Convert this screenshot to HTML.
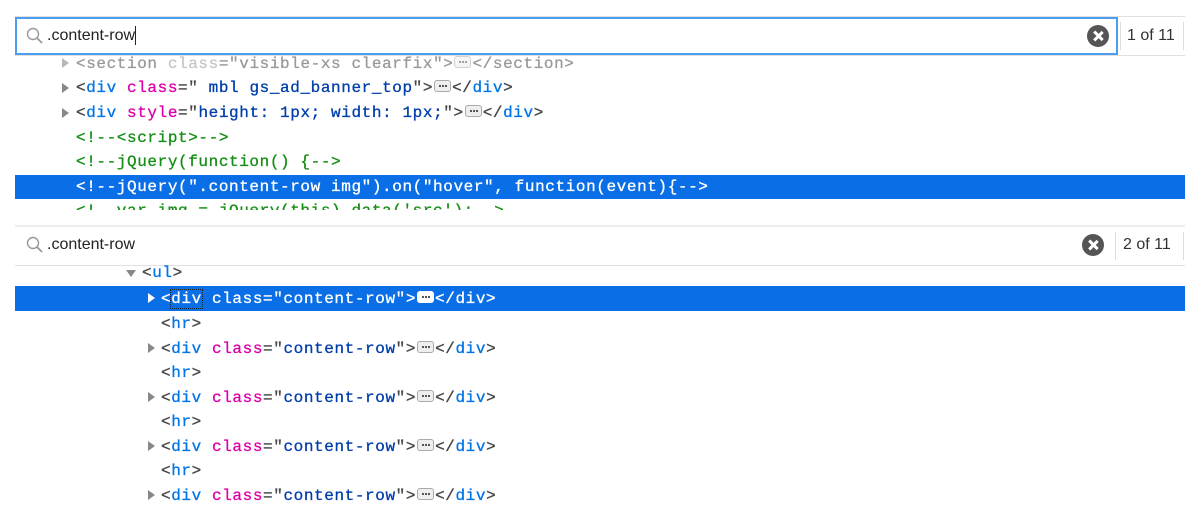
<!DOCTYPE html>
<html><head><meta charset="utf-8"><style>
*{margin:0;padding:0;box-sizing:border-box}
body{width:1200px;height:527px;background:#fff;position:relative;overflow:hidden;font-family:"Liberation Mono",monospace}
.m{font-family:"Liberation Mono",monospace;font-size:16px;letter-spacing:0.6px;white-space:pre;position:absolute;height:24px;line-height:24px;color:#474747;-webkit-text-stroke:0.3px currentColor}
.sel{position:absolute;left:15px;width:1170px;background:#0a6ee6}
.t{color:#0074e8}.a{color:#dd00a9}.v{color:#003eaa}.c{color:#168f16}
.ell{display:inline-block;width:17px;height:12px;border:1px solid #aaa;border-radius:3px;background:#eee;vertical-align:middle;position:relative;top:-2px;margin:0 1px;letter-spacing:0;-webkit-text-stroke:0}
.ell:after{content:"";position:absolute;left:4px;top:4px;width:2px;height:2px;background:#555;box-shadow:3px 0 #555,6px 0 #555}
.tri{position:absolute;width:0;height:0;border-left:7px solid #888;border-top:5.5px solid transparent;border-bottom:5.5px solid transparent}
.trid{position:absolute;width:0;height:0;border-top:7px solid #888;border-left:5.5px solid transparent;border-right:5.5px solid transparent}
.sans{font-family:"Liberation Sans",sans-serif}
.clr{position:absolute;width:22px;height:22px;border-radius:50%;background:#555}
.clr:before,.clr:after{content:"";position:absolute;left:10px;top:5px;width:2.5px;height:12px;background:#fff;transform:rotate(45deg)}
.clr:after{transform:rotate(-45deg)}
.sep{position:absolute;width:1px;background:#ddd}
.hl{position:absolute;left:15px;width:1170px;height:1px;background:#e0e0e0}
.w{color:#fff}
</style></head><body>
<div class="hl" style="top:16px"></div>
<div style="position:absolute;left:15px;top:17px;width:1103px;height:38px;border:2px solid #4a9df0"></div>
<svg style="position:absolute;left:26px;top:27px" width="18" height="18" viewBox="0 0 18 18"><circle cx="7" cy="7" r="5.5" fill="none" stroke="#999" stroke-width="1.4"/><line x1="11" y1="11" x2="16" y2="16" stroke="#999" stroke-width="1.8"/></svg>
<div class="sans" style="position:absolute;left:47px;top:25px;font-size:16px;color:#222;line-height:22px">.content-row<span style="display:inline-block;width:1px;height:19px;background:#222;vertical-align:middle"></span></div>
<div class="clr" style="left:1087px;top:25px"></div>
<div class="sep" style="left:1120px;top:22px;height:28px"></div>
<div class="sans" style="position:absolute;left:1127px;top:25px;font-size:16px;color:#333;line-height:22px">1 of 11</div>
<div class="sep" style="left:1183px;top:22px;height:28px"></div>
<div class="hl" style="top:55px"></div>

<div style="position:absolute;left:0;top:56px;width:1200px;height:154px;overflow:hidden">
<div class="sel" style="top:119px;height:24px"></div>
<div class="tri" style="left:62px;top:2px;opacity:.6"></div>
<div class="m" style="left:76px;top:-4px;opacity:.55">&lt;section <span style="color:#999">class</span>="visible-xs clearfix"&gt;<span class="ell"></span>&lt;/section&gt;</div>
<div class="tri" style="left:62px;top:27px"></div>
<div class="m" style="left:76px;top:20px">&lt;<span class="t">div</span> <span class="a">class</span>="<span class="v"> mbl gs_ad_banner_top</span>"&gt;<span class="ell"></span>&lt;/<span class="t">div</span>&gt;</div>
<div class="tri" style="left:62px;top:52px"></div>
<div class="m" style="left:76px;top:45px">&lt;<span class="t">div</span> <span class="a">style</span>="<span class="v">height: 1px; width: 1px;</span>"&gt;<span class="ell"></span>&lt;/<span class="t">div</span>&gt;</div>
<div class="m c" style="left:76px;top:70px">&lt;!--&lt;script&gt;--&gt;</div>
<div class="m c" style="left:76px;top:94px">&lt;!--jQuery(function() {--&gt;</div>
<div class="m w" style="left:76px;top:119px">&lt;!--jQuery(".content-row img").on("hover", function(event){--&gt;</div>
<div class="m c" style="left:76px;top:143px">&lt;!--var img = jQuery(this).data('src');--&gt;</div>
</div>

<div style="position:absolute;left:15px;top:225px;width:1170px;height:3px;background:linear-gradient(#e4e4e4,#fff)"></div>
<svg style="position:absolute;left:26px;top:236px" width="18" height="18" viewBox="0 0 18 18"><circle cx="7" cy="7" r="5.5" fill="none" stroke="#999" stroke-width="1.4"/><line x1="11" y1="11" x2="16" y2="16" stroke="#999" stroke-width="1.8"/></svg>
<div class="sans" style="position:absolute;left:47px;top:234px;font-size:16px;color:#222;line-height:22px">.content-row</div>
<div class="clr" style="left:1082px;top:234px"></div>
<div class="sep" style="left:1115px;top:232px;height:28px"></div>
<div class="sans" style="position:absolute;left:1123px;top:234px;font-size:16px;color:#333;line-height:22px">2 of 11</div>
<div class="sep" style="left:1183px;top:232px;height:28px"></div>
<div class="hl" style="top:265px"></div>

<div class="trid" style="left:126px;top:270px"></div>
<div class="m" style="left:142px;top:261px">&lt;<span class="t">ul</span>&gt;</div>
<div class="sel" style="top:286px;height:25px"></div>
<div class="tri" style="left:148px;top:293px;border-left-color:#fff"></div>
<div class="m w" style="left:161px;top:287px">&lt;<span style="outline:1px dotted #222">div</span> class="content-row"&gt;<span class="ell" style="background:#fff;border-color:#fff"></span>&lt;/div&gt;</div>
<div class="m" style="left:161px;top:312px">&lt;<span class="t">hr</span>&gt;</div>
<div class="tri" style="left:148px;top:343px"></div>
<div class="m" style="left:161px;top:337px">&lt;<span class="t">div</span> <span class="a">class</span>="<span class="v">content-row</span>"&gt;<span class="ell"></span>&lt;/<span class="t">div</span>&gt;</div>
<div class="m" style="left:161px;top:361px">&lt;<span class="t">hr</span>&gt;</div>
<div class="tri" style="left:148px;top:392px"></div>
<div class="m" style="left:161px;top:386px">&lt;<span class="t">div</span> <span class="a">class</span>="<span class="v">content-row</span>"&gt;<span class="ell"></span>&lt;/<span class="t">div</span>&gt;</div>
<div class="m" style="left:161px;top:410px">&lt;<span class="t">hr</span>&gt;</div>
<div class="tri" style="left:148px;top:441px"></div>
<div class="m" style="left:161px;top:435px">&lt;<span class="t">div</span> <span class="a">class</span>="<span class="v">content-row</span>"&gt;<span class="ell"></span>&lt;/<span class="t">div</span>&gt;</div>
<div class="m" style="left:161px;top:459px">&lt;<span class="t">hr</span>&gt;</div>
<div class="tri" style="left:148px;top:490px"></div>
<div class="m" style="left:161px;top:484px">&lt;<span class="t">div</span> <span class="a">class</span>="<span class="v">content-row</span>"&gt;<span class="ell"></span>&lt;/<span class="t">div</span>&gt;</div>
</body></html>
